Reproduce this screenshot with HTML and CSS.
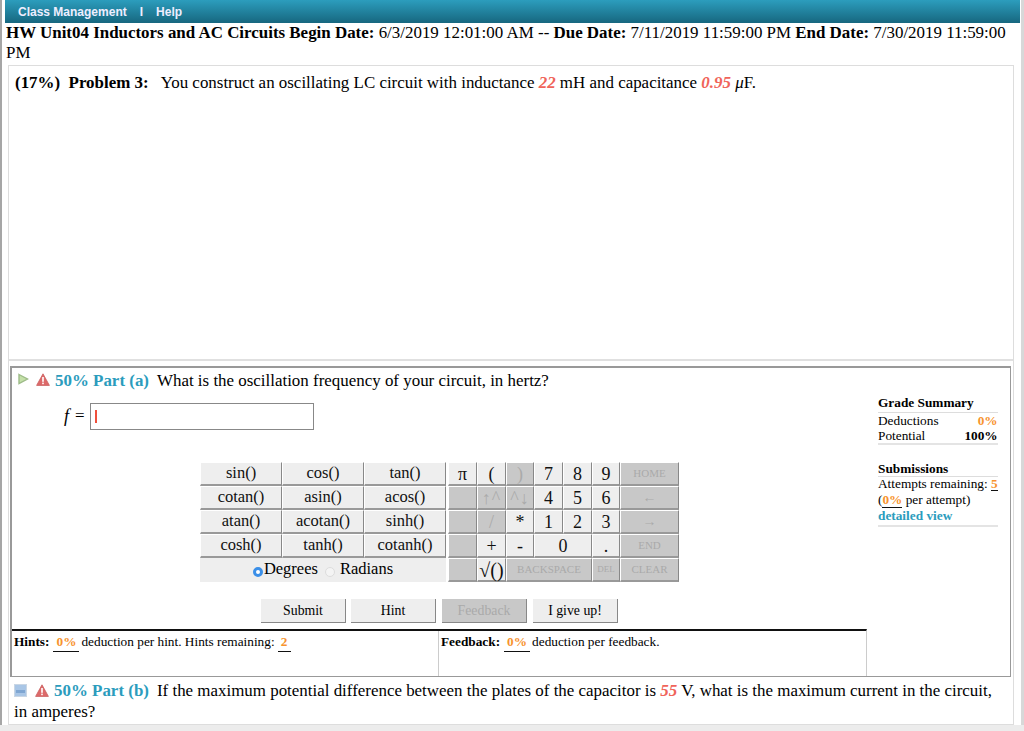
FILE: index.html
```html
<!DOCTYPE html>
<html lang="en">
<head>
<meta charset="utf-8">
<title>Class Management</title>
<link rel="stylesheet" href="styles.css">
</head>
<body>
<div class="window">
  <nav class="nav"><span>Class Management</span><span class="sep">I</span><span>Help</span></nav>
  <div class="title"><b>HW Unit04 Inductors and AC Circuits Begin Date:</b> 6/3/2019 12:01:00 AM -- <b>Due Date:</b> 7/11/2019 11:59:00 PM <b>End Date:</b> 7/30/2019 11:59:00 PM</div>
  <div class="sheet">
    <section class="problem"><b>(17%)&nbsp; Problem 3:</b>&nbsp;&nbsp; You construct an oscillating LC circuit with inductance <i class="val">22</i> mH and capacitance <i class="val">0.95</i> <i>μ</i>F.</section>
    <section class="part-a">
      <div class="part-main">
        <div class="question">
          <svg class="ico-play" viewBox="0 0 12 12" width="12" height="12"><path d="M2 1.5 L10.5 6 L2 10.5 Z" fill="#c4e0a8" stroke="#9dbb88" stroke-width="1.4"/></svg>
          <svg class="ico-warn" viewBox="0 0 14 13" width="14" height="13"><path d="M7 .8 L13.4 12.4 L.6 12.4 Z" fill="#dd6a6a" stroke="#c96060" stroke-width=".8" stroke-linejoin="round"/><rect x="6.2" y="4" width="1.6" height="4.8" fill="#fff"/><rect x="6.2" y="9.6" width="1.6" height="1.6" fill="#fff"/></svg>
          <b class="part-label">50% Part (a)</b><span class="q-text">What is the oscillation frequency of your circuit, in hertz?</span>
        </div>
        <div class="answer"><i>f</i><span class="eq">=</span><div class="input"><span class="caret"></span></div></div>
        <div class="calc">
          <div class="funcs">
            <div class="key">sin()</div><div class="key">cos()</div><div class="key">tan()</div>
            <div class="key">cotan()</div><div class="key">asin()</div><div class="key">acos()</div>
            <div class="key">atan()</div><div class="key">acotan()</div><div class="key">sinh()</div>
            <div class="key">cosh()</div><div class="key">tanh()</div><div class="key">cotanh()</div>
            <div class="angle"><span class="radio on"></span><span>Degrees</span><span class="radio"></span><span>Radians</span></div>
          </div>
          <div class="pad">
            <div class="key">π</div><div class="key">(</div><div class="key off">)</div><div class="key">7</div><div class="key">8</div><div class="key">9</div><div class="key off small">HOME</div>
            <div class="key off"></div><div class="key off arrows">↑^</div><div class="key off arrows">^↓</div><div class="key">4</div><div class="key">5</div><div class="key">6</div><div class="key off arrow">←</div>
            <div class="key off"></div><div class="key off">/</div><div class="key">*</div><div class="key">1</div><div class="key">2</div><div class="key">3</div><div class="key off arrow">→</div>
            <div class="key off"></div><div class="key">+</div><div class="key">-</div><div class="key span2">0</div><div class="key">.</div><div class="key off small">END</div>
            <div class="key off"></div><div class="key root">√()</div><div class="key off small span3">BACKSPACE</div><div class="key off tiny">DEL</div><div class="key off small">CLEAR</div>
          </div>
        </div>
        <div class="actions"><div class="btn">Submit</div><div class="btn">Hint</div><div class="btn off">Feedback</div><div class="btn">I give up!</div></div>
        <div class="info">
          <div class="info-cell"><b>Hints:</b><u class="pct">0%</u>deduction per hint. Hints remaining:<u class="num">2</u></div>
          <div class="info-cell"><b>Feedback:</b><u class="pct">0%</u>deduction per feedback.</div>
        </div>
      </div>
      <aside class="side">
        <h4>Grade Summary</h4>
        <div class="row"><span>Deductions</span><b class="orange">0%</b></div>
        <div class="row end"><span>Potential</span><b>100%</b></div>
        <h4 class="sub">Submissions</h4>
        <div class="attempts">Attempts remaining: <u class="num">5</u><br>(<u class="pct-s">0%</u> per attempt)<br><b class="link">detailed view</b></div>
      </aside>
    </section>
    <section class="part-b"><svg class="ico-sq" viewBox="0 0 13 13" width="13" height="13"><rect x=".5" y=".5" width="12" height="12" fill="#a9c6e6" stroke="#c9d6e4"/><rect x="2" y="6" width="9" height="3" fill="#7fa6d2"/></svg><svg class="ico-warn" viewBox="0 0 14 13" width="14" height="13"><path d="M7 .8 L13.4 12.4 L.6 12.4 Z" fill="#dd6a6a" stroke="#c96060" stroke-width=".8" stroke-linejoin="round"/><rect x="6.2" y="4" width="1.6" height="4.8" fill="#fff"/><rect x="6.2" y="9.6" width="1.6" height="1.6" fill="#fff"/></svg><b class="part-label">50% Part (b)</b><span class="q-text">If the maximum potential difference between the plates of the capacitor is <i class="val">55</i> V, what is the maximum current in the circuit, in amperes?</span></section>
  </div>
  <div class="footer"></div>
</div>
</body>
</html>
```
FILE: styles.css
```css
* { box-sizing: border-box; }
html, body { margin: 0; height: 731px; overflow: hidden; background: #fff; }
body { font-family: "Liberation Serif", "Times New Roman", serif; font-size: 16.93px; color: #000; }
.window { height: 731px; width: 1024px; padding: 0 3px 0 5px; box-shadow: inset 2px 0 0 #a6a6a6, inset -3px 0 0 #d8d8d8; overflow: hidden; }
.nav { height: 23px; margin-right: 1px; padding-left: 13px; display: flex; align-items: center; gap: 13px; background: linear-gradient(#2c9dbd, #17677f); color: #eef; font: bold 12px "Liberation Sans", Arial, sans-serif; }
.title { line-height: 20px; padding: 0 4px 0 1px; height: 42px; }
.sheet { margin-left: 3px; margin-right: 3px; border: 1px solid #ddd; height: 660px; width: 1006px; display: flex; flex-direction: column; }
.footer { height: 6px; margin: 0 -5px; background: #ececec; }
.problem { height: 295px; padding: 7px 6px; border-bottom: 2px solid #e0e0e0; line-height: 20px; }
.val { color: #f0645a; font-weight: bold; }
.part-a { margin: 5px 2px 0 1px; height: 311px; flex: none; border: 2px solid #999; border-bottom-width: 1px; border-right-width: 1px; display: flex; }
.part-main { width: 855px; flex: none; display: flex; flex-direction: column; }
.question { height: 34px; padding: 3px 0 0 5px; display: flex; align-items: flex-start; line-height: 19px; white-space: nowrap; }
.question svg { margin-top: 2px; }
.ico-play { margin-right: 7px; }
.ico-warn { margin-right: 5px; flex: none; }
.part-label { color: #2b9cbd; margin-right: 8px; white-space: nowrap; }
.answer { display: flex; align-items: center; height: 28px; padding-left: 52px; gap: 4px; }
.answer i { font-size: 18px; margin-right: 2px; }
.eq { margin-right: 1px; }
.input { width: 224px; height: 27px; border: 1px solid #888; padding: 6px 0 0 4px; background: #fff; }
.caret { display: block; width: 2px; height: 13px; background: #f0503c; }
.calc { margin-top: 32px; margin-left: 188px; display: flex; }
.funcs { display: grid; grid-template-columns: 82px 82px 82px; grid-auto-rows: 24px; width: 248px; }
.pad { display: grid; grid-template-columns: 29px 29px 28px 29px 29px 28px 59px; grid-auto-rows: 24px; width: 231px; }
.key { background: #eee; border-right: 1px solid #888; border-bottom: 2px solid #999; display: flex; align-items: center; justify-content: center; line-height: 1; font-size: 16.5px; color: #111; border-left: 1px solid #fff; border-top: 1px solid #fff; }
.pad .key { font-size: 18px; }
.key.off { background: #c8c8c8; color: #aaa; }
.pad .small { font-size: 11px; }
.pad .tiny { font-size: 9px; }
.pad .arrow { font-size: 14px; }
.pad .arrows { letter-spacing: 1px; }
.span2 { grid-column: span 2; }
.span3 { grid-column: span 3; }
.pad .root { font-size: 20px; }
.angle { grid-column: span 3; background: #eee; display: flex; align-items: center; justify-content: center; font-size: 16.5px; height: 24px; padding-bottom: 3px; }
.radio { width: 10px; height: 10px; border-radius: 50%; background: #f4f4f4; border: 1px solid #ddd; margin: 6px 5px 0 7px; }
.radio.on { background: #fff; border: 3px solid #3b8fe8; margin: 6px 1px 0 0; }
.actions { display: flex; gap: 5px; margin-top: 17px; margin-left: 249px; height: 24px; }
.btn { width: 85px; height: 24px; background: #eee; border-right: 1px solid #888; border-bottom: 1px solid #888; font-size: 13.8px; display: flex; align-items: center; justify-content: center; }
.btn.off { background: #c8c8c8; color: #aaa; }
.btn:nth-child(n+3) { margin-left: 1px; }
.info { margin-top: 6px; flex: 1; border-top: 2px solid #111; display: grid; grid-template-columns: 427px 1fr; border-right: 1px solid #ccc; }
.info-cell { font-size: 13.3px; line-height: 14px; padding: 4px 2px; border-right: 1px solid #ccc; }
.info-cell:last-child { border-right: 0; }
.pct, .num { color: #f7932e; font-weight: bold; text-decoration: none; border-bottom: 1px solid #111; display: inline-block; height: 17px; text-align: center; }
.pct { width: 26px; margin: 0 2px 0 4px; }
.num { width: 13px; margin-left: 3px; }
.side { flex: 1; padding: 27px 13px 0 11px; font-size: 13.3px; line-height: 15px; }
.side h4 { margin: 0; font-size: 13.3px; padding-bottom: 2px; border-bottom: 1px solid #ddd; line-height: 15px; }
.side .sub { margin-top: 16px; padding-bottom: 0; }
.row { display: flex; justify-content: space-between; }
.row.end { border-bottom: 2px solid #e4e4e4; }
.orange { color: #f7932e; }
.attempts { border-bottom: 2px solid #e4e4e4; line-height: 16px; white-space: nowrap; margin-top: -1px; padding-bottom: 1px; }
.attempts .num { width: auto; height: 15px; margin-left: 0; }
.pct-s { color: #f7932e; font-weight: bold; text-decoration: none; border-bottom: 1px solid #111; }
.link { color: #2b9cbd; }
.part-b { padding: 3px 6px 0 5px; line-height: 21px; }
.part-b svg { vertical-align: -1px; }
.part-b .ico-sq { margin-right: 8px; }
```
